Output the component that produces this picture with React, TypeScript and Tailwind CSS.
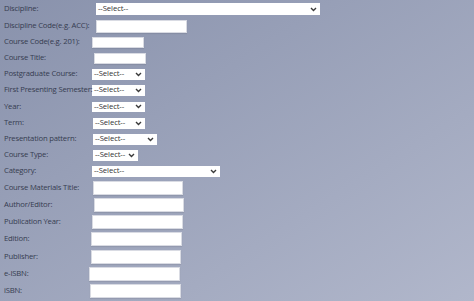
type Field = {
  label: string;
  kind: "select" | "input";
  h: string; // row height
  ml: string; // control left offset (from label start)
  w: string;
  ch: string; // control height
};

const fields: Field[] = [
  { label: "Discipline:", kind: "select", h: "h-[18px]", ml: "ml-[92px]", w: "w-[224px]", ch: "h-[12px]" },
  { label: "Discipline Code(e.g. ACC):", kind: "input", h: "h-[16px]", ml: "ml-[92px]", w: "w-[91px]", ch: "h-[13px]" },
  { label: "Course Code(e.g. 201):", kind: "input", h: "h-[16px]", ml: "ml-[88px]", w: "w-[52px]", ch: "h-[11px]" },
  { label: "Course Title:", kind: "input", h: "h-[16px]", ml: "ml-[90px]", w: "w-[52px]", ch: "h-[11px]" },
  { label: "Postgraduate Course:", kind: "select", h: "h-[16px]", ml: "ml-[88px]", w: "w-[53px]", ch: "h-[11px]" },
  { label: "First Presenting Semester:", kind: "select", h: "h-[16px]", ml: "ml-[88px]", w: "w-[53px]", ch: "h-[11px]" },
  { label: "Year:", kind: "select", h: "h-[17px]", ml: "ml-[88px]", w: "w-[53px]", ch: "h-[10px]" },
  { label: "Term:", kind: "select", h: "h-[16px]", ml: "ml-[89px]", w: "w-[52px]", ch: "h-[11px]" },
  { label: "Presentation pattern:", kind: "select", h: "h-[16px]", ml: "ml-[89px]", w: "w-[64px]", ch: "h-[11px]" },
  { label: "Course Type:", kind: "select", h: "h-[16px]", ml: "ml-[89px]", w: "w-[45px]", ch: "h-[11px]" },
  { label: "Category:", kind: "select", h: "h-[16px]", ml: "ml-[88px]", w: "w-[128px]", ch: "h-[11px]" },
  { label: "Course Materials Title:", kind: "input", h: "h-[17px]", ml: "ml-[89px]", w: "w-[90px]", ch: "h-[14px]" },
  { label: "Author/Editor:", kind: "input", h: "h-[17px]", ml: "ml-[90px]", w: "w-[90px]", ch: "h-[14px]" },
  { label: "Publication Year:", kind: "input", h: "h-[17px]", ml: "ml-[88px]", w: "w-[91px]", ch: "h-[14px]" },
  { label: "Edition:", kind: "input", h: "h-[18px]", ml: "ml-[87px]", w: "w-[91px]", ch: "h-[14px]" },
  { label: "Publisher:", kind: "input", h: "h-[17px]", ml: "ml-[87px]", w: "w-[90px]", ch: "h-[14px]" },
  { label: "e-ISBN:", kind: "input", h: "h-[17px]", ml: "ml-[85px]", w: "w-[91px]", ch: "h-[14px]" },
  { label: "iSBN:", kind: "input", h: "h-[17px]", ml: "ml-[86px]", w: "w-[91px]", ch: "h-[14px]" },
];

function Chevron() {
  return (
    <svg className="h-[5px] w-[7px] shrink-0" viewBox="0 0 7 5" fill="none">
      <path d="M1 1l2.5 2.5L6 1" stroke="#3a3a3a" strokeWidth={1.4} />
    </svg>
  );
}

function FakeSelect({ w, ch }: { w: string; ch: string }) {
  return (
    <div
      className={`${w} ${ch} flex items-center justify-between gap-[2px] overflow-hidden bg-white pl-[2px] pr-[3px] text-[7.7px] leading-none tracking-[-0.1px] text-[#333]`}
    >
      <span className="whitespace-nowrap">--Select--</span>
      <Chevron />
    </div>
  );
}

export default function App() {
  return (
    <div
      className="h-[301px] w-[474px] overflow-hidden bg-gradient-to-br from-[#8992ac] to-[#b1b7cb] pl-[4px]"
      style={{ fontFamily: '"Open Sans", "Noto Sans", sans-serif' }}
    >
      {fields.map((f) => (
        <div key={f.label} className={`relative flex items-center ${f.h}`}>
          <span className="absolute left-0 whitespace-nowrap text-[7.7px] leading-none tracking-[-0.2px] text-[#363c50]">
            {f.label}
          </span>
          <div className={f.ml}>
            {f.kind === "select" ? (
              <FakeSelect w={f.w} ch={f.ch} />
            ) : (
              <div
                className={`${f.w} ${f.ch} border border-[#d9dbe3] bg-white shadow-[0_1px_1px_rgba(0,0,0,0.08)]`}
              />
            )}
          </div>
        </div>
      ))}
    </div>
  );
}
